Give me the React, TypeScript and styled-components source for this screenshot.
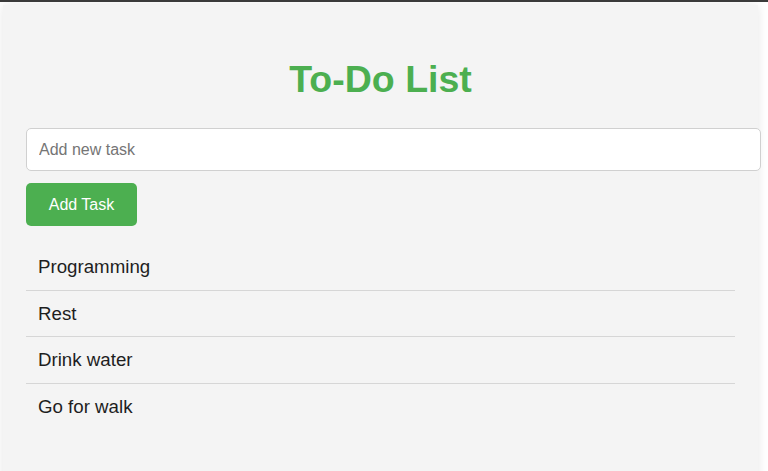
import React from "react";
import styled, { createGlobalStyle } from "styled-components";

const Global = createGlobalStyle`
  html, body {
    margin: 0;
    padding: 0;
    background: #ffffff;
    font-family: "Liberation Sans", Arial, sans-serif;
  }
  * { box-sizing: content-box; }
`;

const TopBar = styled.div`
  height: 2px;
  background: #3a3a3a;
`;

const Page = styled.div`
  padding: 3px 10px 0 3px;
  height: 466px;
  overflow: hidden;
`;

const Card = styled.div`
  background: #f4f4f4;
  box-shadow: 0 0 10px rgba(0, 0, 0, 0.1);
  padding: 53px 23px 40px;
  min-height: 480px;
`;

const Title = styled.h1`
  margin: 0 0 27px;
  text-align: center;
  color: #4caf50;
  font-size: 37.5px;
  line-height: 43px;
  font-weight: bold;
`;

const Input = styled.input`
  display: block;
  width: 100%;
  margin: 0;
  padding: 10.5px 12px;
  border: 1px solid #d0d0d0;
  border-radius: 5px;
  background: #ffffff;
  font-family: "Liberation Sans", Arial, sans-serif;
  font-size: 16px;
  line-height: 20px;
  color: #333;
  outline: none;
  &::placeholder {
    color: #757575;
  }
`;

const AddButton = styled.button`
  display: block;
  margin-top: 12px;
  width: 111px;
  height: 43px;
  padding: 0;
  border: none;
  border-radius: 5px;
  background: #4caf50;
  color: #ffffff;
  font-family: "Liberation Sans", Arial, sans-serif;
  font-size: 16px;
  cursor: pointer;
`;

const List = styled.ul`
  list-style: none;
  margin: 18px 0 0;
  padding: 0;
`;

const Item = styled.li<{ $last?: boolean }>`
  padding: 12px 12px;
  font-size: 18.7px;
  line-height: 21.5px;
  color: #1e1e1e;
  border-bottom: ${(p) => (p.$last ? "none" : "1px solid #d6d6d6")};
`;

const tasks = ["Programming", "Rest", "Drink water", "Go for walk"];

export default function App() {
  return (
    <>
      <Global />
      <TopBar />
      <Page>
        <Card>
          <Title>To-Do List</Title>
          <Input placeholder="Add new task" />
          <AddButton>Add Task</AddButton>
          <List>
            {tasks.map((t, i) => (
              <Item key={t} $last={i === tasks.length - 1}>
                {t}
              </Item>
            ))}
          </List>
        </Card>
      </Page>
    </>
  );
}
